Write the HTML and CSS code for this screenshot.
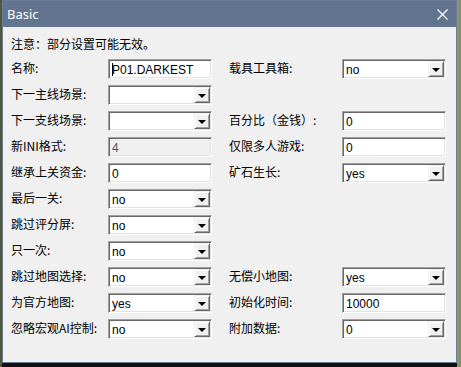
FILE: index.html
```html
<!DOCTYPE html>
<html>
<head>
<meta charset="utf-8">
<link rel="stylesheet" href="styles.css">
</head>
<body>
<div class="desk">
  <div class="window">
    <div class="titlebar">
      <span class="title">Basic</span>
      <span class="close"><svg width="11" height="11" viewBox="0 0 11 11"><path d="M0.5 0.5 L10.5 10.5 M10.5 0.5 L0.5 10.5" stroke="#fff" stroke-width="1.2" fill="none"/></svg></span>
    </div>
    <div class="body">
      <div class="notice">注意：部分设置可能无效。</div>
      <div class="form">
        <div class="lbl">名称:</div>
        <div class="field"><span class="caret"></span>P01.DARKEST</div>
        <div class="lbl r">载具工具箱:</div>
        <div class="field combo">no<span class="btn"><i></i></span></div>

        <div class="lbl">下一主线场景:</div>
        <div class="field combo"><span class="btn"><i></i></span></div>
        <div class="lbl r"></div>
        <div class="empty"></div>

        <div class="lbl">下一支线场景:</div>
        <div class="field combo"><span class="btn"><i></i></span></div>
        <div class="lbl r">百分比（金钱）:</div>
        <div class="field">0</div>

        <div class="lbl">新INI格式:</div>
        <div class="field disabled">4</div>
        <div class="lbl r">仅限多人游戏:</div>
        <div class="field">0</div>

        <div class="lbl">继承上关资金:</div>
        <div class="field">0</div>
        <div class="lbl r">矿石生长:</div>
        <div class="field combo">yes<span class="btn"><i></i></span></div>

        <div class="lbl">最后一关:</div>
        <div class="field combo">no<span class="btn"><i></i></span></div>
        <div class="lbl r"></div>
        <div class="empty"></div>

        <div class="lbl">跳过评分屏:</div>
        <div class="field combo">no<span class="btn"><i></i></span></div>
        <div class="lbl r"></div>
        <div class="empty"></div>

        <div class="lbl">只一次:</div>
        <div class="field combo">no<span class="btn"><i></i></span></div>
        <div class="lbl r"></div>
        <div class="empty"></div>

        <div class="lbl">跳过地图选择:</div>
        <div class="field combo">no<span class="btn"><i></i></span></div>
        <div class="lbl r">无偿小地图:</div>
        <div class="field combo">yes<span class="btn"><i></i></span></div>

        <div class="lbl">为官方地图:</div>
        <div class="field combo">yes<span class="btn"><i></i></span></div>
        <div class="lbl r">初始化时间:</div>
        <div class="field">10000</div>

        <div class="lbl">忽略宏观AI控制:</div>
        <div class="field combo">no<span class="btn"><i></i></span></div>
        <div class="lbl r">附加数据:</div>
        <div class="field combo">0<span class="btn"><i></i></span></div>
      </div>
    </div>
  </div>
</div>
</body>
</html>
```

FILE: styles.css
```css
html, body {
  margin: 0;
  padding: 0;
}
body {
  width: 461px;
  height: 367px;
  overflow: hidden;
  background: linear-gradient(to right, #4a5a3a 0, #6a4a3a 2px, transparent 2px),
              linear-gradient(to left, #7c8a62 0, #8e9a78 4px, transparent 4px),
              #111;
}
.desk {
  padding-left: 2px;
}
.window {
  width: 453px;
  height: 361px;
  border: 1px solid #6b7c96;
  background: #f0f0f0;
  display: flex;
  flex-direction: column;
}
.titlebar {
  height: 26px;
  background: #627490;
  display: flex;
  align-items: center;
  justify-content: space-between;
  padding: 0 8px 0 4px;
  flex: none;
}
.title {
  color: #fff;
  font-family: "Noto Sans", "Open Sans", sans-serif;
  font-size: 13px;
  margin-top: -1px;
}
.close {
  display: flex;
  width: 11px;
  height: 11px;
}
.body {
  padding: 8px 0 0 8px;
  font-family: "Noto Sans CJK SC", "Liberation Sans", sans-serif;
  font-size: 12px;
  color: #000;
}
.notice {
  height: 18px;
  line-height: 18px;
}
.form {
  margin-top: 6px;
  display: grid;
  grid-template-columns: 97px 104px 17px 113px 104px;
  grid-auto-rows: 20px;
  row-gap: 6px;
  align-items: center;
}
.lbl {
  line-height: 16px;
  margin-top: -3px;
  white-space: nowrap;
}
.lbl.r {
  grid-column: 4;
}
.empty {
  height: 20px;
}
.field {
  position: relative;
  height: 20px;
  box-sizing: border-box;
  background: #fff;
  border-style: solid;
  border-width: 1px;
  border-color: #a0a0a0 #fff #fff #a0a0a0;
  box-shadow: inset 1px 1px 0 #696969, inset -1px -1px 0 #e3e3e3;
  font-family: "Liberation Sans", "Noto Sans CJK SC", sans-serif;
  font-size: 12px;
  line-height: 18px;
  padding: 1px 0 0 3px;
  color: #000;
}
.field.disabled {
  background: #f0f0f0;
  color: #555;
}
.caret {
  position: absolute;
  left: 3px;
  top: 3px;
  width: 1px;
  height: 13px;
  background: #000;
}
.btn {
  position: absolute;
  right: 1px;
  top: 1px;
  width: 16px;
  height: 16px;
  box-sizing: border-box;
  background: #f0f0f0;
  border-style: solid;
  border-width: 1px;
  border-color: #f0f0f0 #696969 #696969 #f0f0f0;
  box-shadow: inset 1px 1px 0 #fff, inset -1px -1px 0 #a0a0a0;
  display: flex;
  align-items: center;
  justify-content: center;
}
.btn i {
  width: 0;
  height: 0;
  border-left: 4px solid transparent;
  border-right: 4px solid transparent;
  border-top: 4px solid #000;
  margin-top: 1px;
}
```
